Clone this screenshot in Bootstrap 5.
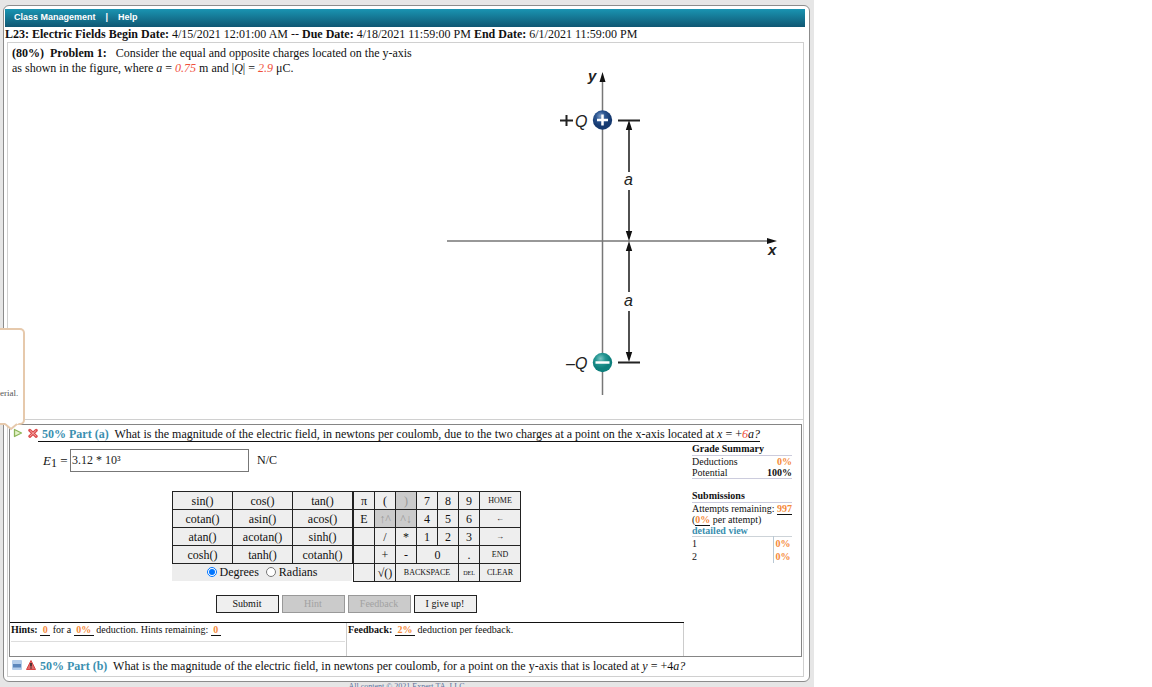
<!DOCTYPE html>
<html lang="en">
<head>
<meta charset="utf-8">
<meta name="viewport" content="width=device-width, initial-scale=1">
<title>L23: Electric Fields</title>
<link href="https://cdn.jsdelivr.net/npm/bootstrap@5.3.0/dist/css/bootstrap.min.css" rel="stylesheet">
<style>
body { font-family: "Liberation Serif", serif; font-size: 12px; line-height: 15px; color: #111; background: #fff; }
a { text-decoration: none; }
.sheet { max-width: 814px; background: #e6e6e6; padding: 5px 4px 0 3px; }
.frame { background: #fff; border: 1px solid #8c8c8c; border-radius: 6px; padding: 3px 4px 4px 1px; }
.topbar { height: 18px; background: linear-gradient(#1a94b2, #0f5773); font: bold 9px/16px "Liberation Sans", sans-serif; color: #fff; gap: 10px; padding-left: 9px; }
.topbar a { color: #fff; }
.sheet-title { font-size: 12px; line-height: 15px; }
.problem-panel { border: 1px solid #d0d0d0; margin: 0 1px 0 2px; }
.statement { border-bottom: 1px solid #d0d0d0; padding: 3px 4px; }
.statement p { flex: 1 1 0; margin: 0; }
.figure-box { flex: 0 1 358px; height: 370px; }
.figure-box svg { display: block; width: 100%; height: auto; }
.hot { color: #f0503c; }
.orange { color: #f58a3a; font-weight: bold; }
.uline { border-bottom: 1px solid #111; }
.part-link { color: #3a8fb0; font-weight: bold; }
.part-open { border: 1px solid #858585; margin: 4px 1px 0 1px; }
.part-head { height: 18px; padding-left: 3px; }
.part-head svg, .part-closed svg { flex: none; }
.part-head svg:first-child { margin-right: 5px; }
.part-text { padding: 0 0 0 4px; line-height: 14px; }
.work { flex: 1 1 0; max-width: 674px; }
.answer { padding: 6px 0 0 33px; gap: 4px; }
.answer label { width: 23px; white-space: nowrap; font-size: 13px; }
.answer label sub { bottom: -2px; font-size: 12px; }
.answer input { width: 179px; height: 23px; border: 1px solid #777; border-radius: 0; padding: 0 1px; font-size: 12px; color: #222; background: #fff; }
.keypads { margin: 19px 2px 0 0; gap: 1px; }
.func-pad { display: grid; grid-template-columns: repeat(3, 60px); grid-auto-rows: 18px; background: #ededed; }
.num-pad { display: grid; grid-template-columns: repeat(6, 21px) 41px; grid-auto-rows: 18px; }
.pad-key { border: 1px solid #222; margin-right: -1px; margin-bottom: -1px; background: #eee; padding: 0; font-size: 12px; line-height: 14px; color: #111; text-align: center; overflow: hidden; }
.pad-key:disabled { background: #cbcbcb; color: #999; }
.tiny-key { font-size: 8px; }
.del-key { font-size: 6px; }
.wide-key { grid-column: span 2; }
.triple-key { grid-column: span 3; }
.angle { grid-column: 1 / -1; gap: 3px; line-height: 16px; }
.angle input { width: 10px; height: 10px; margin: 0; }
.actions { gap: 3px; margin: 14px 2px 9px 0; }
.action-key { width: 63px; height: 18px; border: 1px solid #222; background: #efefef; font-size: 10px; line-height: 14px; padding: 0; color: #111; }
.action-key:disabled { background: #cbcbcb; border-color: #999; color: #a2a2a2; }
.notes { border-top: 1px solid #111; font-size: 10px; line-height: 12px; height: 34px; }
.notes > div { flex: 1 1 0; border-right: 1px solid #ccc; padding: 1px; }
.hint-line { border-bottom: 1px solid #ddd; height: 18px; }
.grade { width: 100px; margin-right: 9px; font-size: 10px; line-height: 11px; }
.grade h2 { font-size: 10px; font-weight: bold; line-height: 12px; margin: 0; border-bottom: 1px solid #ccd; }
.grade table { width: 100%; }
.grade td { padding: 0; }
.totals { border-bottom: 1px solid #ccd; margin-bottom: 11px; }
.tries { border-top: 1px solid #cdd3d8; line-height: 13px; }
.tries td + td { width: 19px; border-left: 1px solid #b9c8d4; padding-left: 2px; }
.part-closed { height: 19px; padding: 0 0 0 4px; gap: 4px; }
.part-closed svg { margin-bottom: 3px; }
.foot { font-size: 8px; line-height: 10px; color: #60709a; text-align: center; }
.callout { position: absolute; left: 0; top: 328px; width: 25px; height: 97px; border: 2px solid #e6c9ac; border-left: 0; border-radius: 0 5px 5px 0; background: #fff; font-size: 9px; line-height: 12px; color: #555; padding-top: 57px; }
.callout svg { position: absolute; left: 5px; top: 93px; }
</style>
<script src="https://cdn.jsdelivr.net/npm/bootstrap@5.3.0/dist/js/bootstrap.bundle.min.js"></script>
</head>
<body>
<div class="sheet position-relative">
  <main class="frame">
    <nav class="topbar d-flex"><a href="#">Class Management</a><span>|</span><a href="#">Help</a></nav>
    <h1 class="sheet-title mb-0 fw-normal"><b>L23: Electric Fields Begin Date:</b> 4/15/2021 12:01:00 AM -- <b>Due Date:</b> 4/18/2021 11:59:00 PM <b>End Date:</b> 6/1/2021 11:59:00 PM</h1>
    <div class="problem-panel">
      <section class="statement d-flex">
        <p><b>(80%)&nbsp; Problem 1:</b> &nbsp; Consider the equal and opposite charges located on the y-axis<br>as shown in the figure, where <i>a</i> = <i class="hot">0.75</i> m and |<i>Q</i>| = <span class="hot"><i>2.9</i></span> μC.</p>
        <div class="figure-box">
          <svg viewBox="441 46 358 360" font-family="Liberation Sans, sans-serif" font-style="italic" font-size="15" fill="#222">
            <defs>
              <radialGradient id="pos" cx=".4" cy=".3"><stop offset="0" stop-color="#7d9cc6"/><stop offset=".5" stop-color="#2a5490"/><stop offset="1" stop-color="#163a70"/></radialGradient>
              <radialGradient id="neg" cx=".4" cy=".3"><stop offset="0" stop-color="#7cc6c4"/><stop offset=".5" stop-color="#279793"/><stop offset="1" stop-color="#0d7f7c"/></radialGradient>
            </defs>
            <path d="M602.500 80V395M447 241H768" stroke="#777" stroke-width="1.500" fill="none"/>
            <path d="M629 123V172M629 190V233M629 249V292M629 311V354" stroke="#333" stroke-width="1.700" fill="none"/>
            <path d="M618 120.500H640M618 362.500H640" stroke="#222" stroke-width="1.800" fill="none"/>
            <path d="M602.500 72L605.500 82H599.500ZM777 241L767 238V244ZM629 120L632.200 130H625.800ZM629 241L632.200 231H625.800ZM629 241L632.200 251H625.800ZM629 362L632.200 352H625.800Z" fill="#111"/>
            <circle cx="602.500" cy="120" r="9.700" fill="url(#pos)"/><path d="M597 120H608M602.500 114.500V125.500" stroke="#fff" stroke-width="2.500"/>
            <circle cx="602.500" cy="362.500" r="9.700" fill="url(#neg)"/><path d="M595.500 362.500H609.500" stroke="#fff" stroke-width="2.500"/>
            <text x="588" y="81" font-weight="bold">y</text>
            <text x="768" y="255" font-weight="bold">x</text>
            <path d="M560 120.500H573M566.500 115V126" stroke="#222" stroke-width="2"/>
            <text x="575" y="127" font-size="16">Q</text>
            <text x="566" y="369" font-size="16">–Q</text>
            <text x="624" y="185" font-size="16">a</text>
            <text x="624" y="306" font-size="16">a</text>
          </svg>
        </div>
      </section>
      <section class="part-open">
        <div class="part-head d-flex align-items-center">
          <svg width="10" height="12" viewBox="0 0 10 12"><path d="M1.500 1.500L8.500 5L1.500 8.500Z" fill="#e4f2c8" stroke="#8cb65a" stroke-width="1.300" stroke-linejoin="round"/></svg>
          <svg width="10" height="12" viewBox="0 0 11 12"><path d="M2 2L9 8.500M9 2L2 8.500" stroke="#dc4a4a" stroke-width="3.400" stroke-linecap="round"/><path d="M2 2L9 8.500M9 2L2 8.500" stroke="#f6b4b4" stroke-width="1"/></svg>
          <div class="uline part-text"><a href="#" class="part-link">50% Part (a)</a>&nbsp; What is the magnitude of the electric field, in newtons per coulomb, due to the two charges at a point on the x-axis located at <i>x</i> = +<i><span class="hot">6</span>a?</i></div>
        </div>
        <div class="d-flex">
          <div class="work">
            <div class="answer d-flex align-items-center">
              <label for="ans"><i>E</i><sub>1</sub> =</label>
              <input id="ans" type="text" value="3.12 * 10³">
              <span class="ms-1">N/C</span>
            </div>
            <div class="keypads d-flex justify-content-center">
              <div class="func-pad">
                <button class="pad-key">sin()</button><button class="pad-key">cos()</button><button class="pad-key">tan()</button>
                <button class="pad-key">cotan()</button><button class="pad-key">asin()</button><button class="pad-key">acos()</button>
                <button class="pad-key">atan()</button><button class="pad-key">acotan()</button><button class="pad-key">sinh()</button>
                <button class="pad-key">cosh()</button><button class="pad-key">tanh()</button><button class="pad-key">cotanh()</button>
                <div class="angle d-flex align-items-center justify-content-center">
                  <input type="radio" name="angle" id="deg" checked><label for="deg">Degrees</label>
                  <input type="radio" name="angle" id="rad" class="ms-1"><label for="rad">Radians</label>
                </div>
              </div>
              <div class="num-pad">
                <button class="pad-key">π</button><button class="pad-key">(</button><button class="pad-key" disabled>)</button><button class="pad-key">7</button><button class="pad-key">8</button><button class="pad-key">9</button><button class="pad-key tiny-key">HOME</button>
                <button class="pad-key">E</button><button class="pad-key" disabled>↑^</button><button class="pad-key" disabled>^↓</button><button class="pad-key">4</button><button class="pad-key">5</button><button class="pad-key">6</button><button class="pad-key tiny-key">←</button>
                <button class="pad-key" aria-label="blank"></button><button class="pad-key">/</button><button class="pad-key">*</button><button class="pad-key">1</button><button class="pad-key">2</button><button class="pad-key">3</button><button class="pad-key tiny-key">→</button>
                <button class="pad-key" aria-label="blank"></button><button class="pad-key">+</button><button class="pad-key">-</button><button class="pad-key wide-key">0</button><button class="pad-key">.</button><button class="pad-key tiny-key">END</button>
                <button class="pad-key" aria-label="blank"></button><button class="pad-key">√()</button><button class="pad-key tiny-key triple-key">BACKSPACE</button><button class="pad-key del-key">DEL</button><button class="pad-key tiny-key">CLEAR</button>
              </div>
            </div>
            <div class="actions d-flex justify-content-center">
              <button class="action-key">Submit</button><button class="action-key" disabled>Hint</button><button class="action-key" disabled>Feedback</button><button class="action-key">I give up!</button>
            </div>
            <div class="notes d-flex">
              <div><div class="hint-line"><b>Hints:</b> <span class="uline orange">&nbsp;0&nbsp;</span> for a <span class="uline orange">&nbsp;0%&nbsp;</span> deduction. Hints remaining: <span class="uline orange">&nbsp;0&nbsp;</span></div></div>
              <div><b>Feedback:</b> <span class="uline orange">&nbsp;2%&nbsp;</span> deduction per feedback.</div>
            </div>
          </div>
          <aside class="grade ms-auto">
            <h2>Grade Summary</h2>
            <table class="totals"><tr><td>Deductions</td><td class="orange text-end">0%</td></tr><tr><td>Potential</td><td class="text-end fw-bold">100%</td></tr></table>
            <h2>Submissions</h2>
            <div>Attempts remaining: <span class="orange uline">997</span></div>
            <div>(<span class="orange uline">0%</span> per attempt)</div>
            <a href="#" class="part-link">detailed view</a>
            <table class="tries"><tr><td>1</td><td class="orange">0%</td></tr><tr><td>2</td><td class="orange">0%</td></tr></table>
          </aside>
        </div>
      </section>
      <section class="part-closed d-flex align-items-center">
        <svg width="10" height="10" viewBox="0 0 10 10"><rect width="10" height="10" rx="1" fill="#b4cdea"/><rect x="1" y="4" width="8" height="3.500" fill="#5b86bb"/></svg>
        <svg width="10" height="10" viewBox="0 0 10 10"><path d="M5 .5L9.500 9.500H.5Z" fill="#e06a6a" stroke="#d64545" stroke-linejoin="round"/><path d="M5 3V6.500M5 7.500V8.500" stroke="#222" stroke-width="1.500"/></svg>
        <div><a href="#" class="part-link">50% Part (b)</a>&nbsp; What is the magnitude of the electric field, in newtons per coulomb, for a point on the y-axis that is located at <i>y</i> = +4<i>a?</i></div>
      </section>
    </div>
  </main>
  <footer class="foot">All content © 2021 Expert TA, LLC</footer>
  <div class="callout">erial.<svg width="14" height="8" viewBox="0 0 14 8"><path d="M0 0H14L6 6Z" fill="#fff"/><path d="M0 1L6 6L12 1" fill="none" stroke="#e6c9ac" stroke-width="2"/></svg></div>
</div>
</body>
</html>
